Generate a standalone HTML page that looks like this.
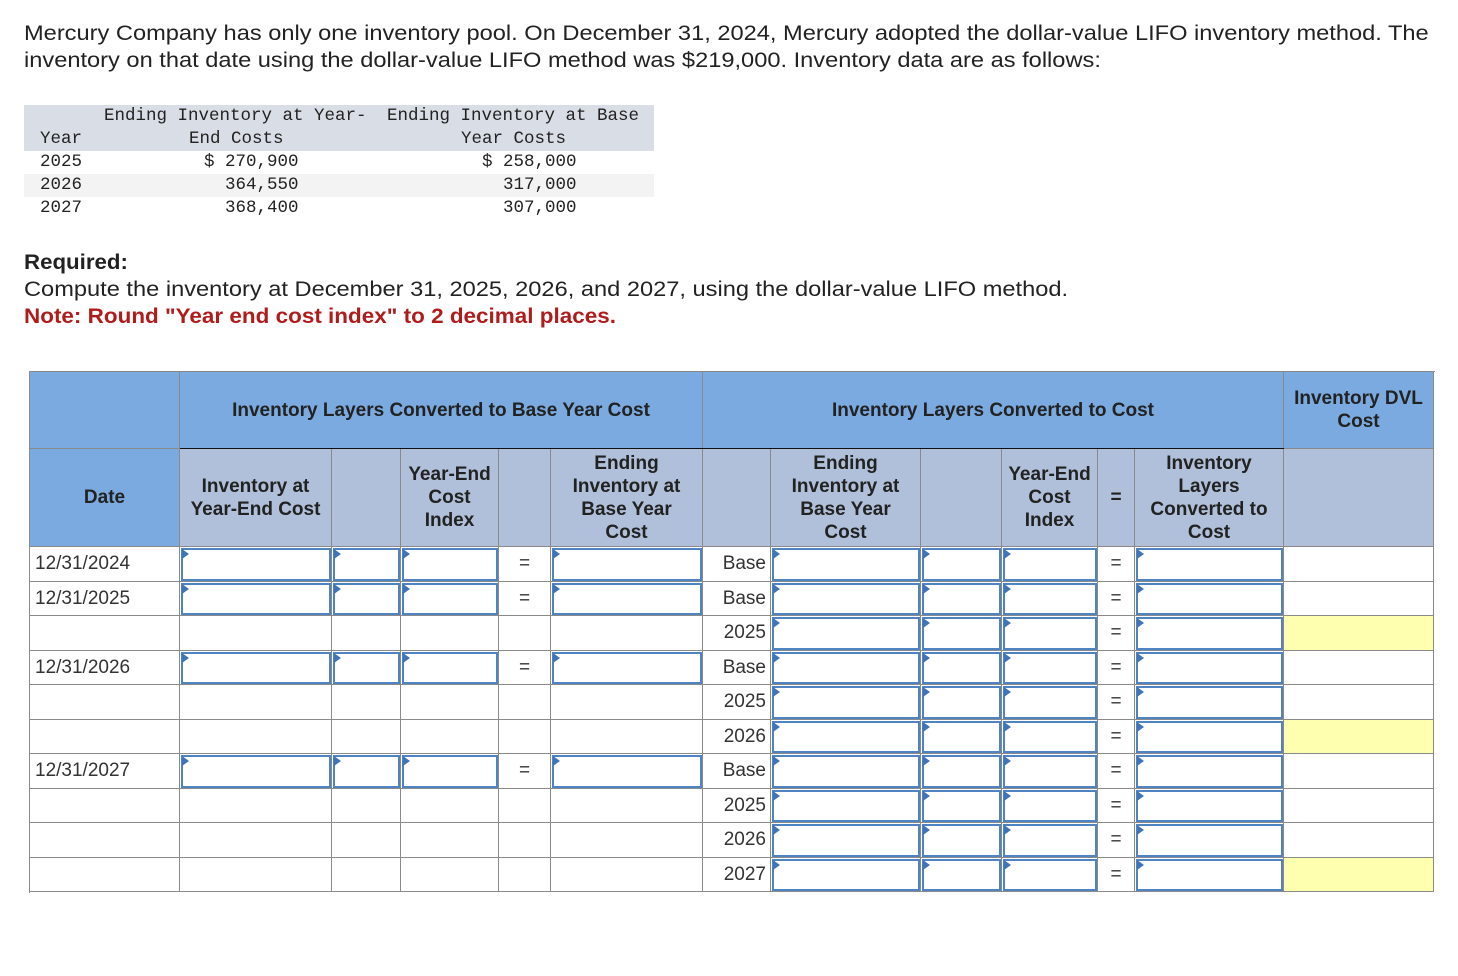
<!DOCTYPE html>
<html><head><meta charset="utf-8">
<style>
body{margin:0;width:1458px;height:976px;background:#fff;position:relative;font-family:"Liberation Sans",sans-serif;color:#222;overflow:hidden}
.t{position:absolute;white-space:nowrap}
.p{font-size:21px;left:24px;transform-origin:0 0}
.m{font-family:"Liberation Mono",monospace;font-size:17.5px;position:absolute;white-space:pre;color:#222}
.c{position:absolute;box-sizing:border-box;border-right:1px solid #8a8a8a;border-bottom:1px solid #8a8a8a;display:flex;align-items:center;justify-content:center;text-align:center;font-size:19px}
.h{font-weight:bold;font-size:19px;line-height:23px;color:#222}
.in{position:absolute;box-sizing:border-box;border:2px solid #4f84c4;background:#fff}
.in:before{content:"";position:absolute;left:-1px;top:-1px;border-left:7px solid #3f74b8;border-top:5px solid transparent;border-bottom:5px solid transparent}
</style></head><body>
<div class="t p" style="top:22px;transform:scaleX(1.125)">Mercury Company has only one inventory pool. On December 31, 2024, Mercury adopted the dollar-value LIFO inventory method. The</div>
<div class="t p" style="top:49px;transform:scaleX(1.125)">inventory on that date using the dollar-value LIFO method was $219,000. Inventory data are as follows:</div>

<div style="position:absolute;left:24px;top:105px;width:630px;height:46px;background:#d9dde6"></div>
<div style="position:absolute;left:24px;top:174px;width:630px;height:23px;background:#f3f3f3"></div>
<div class="m" style="left:104px;top:106px">Ending Inventory at Year-</div>
<div class="m" style="left:387px;top:106px">Ending Inventory at Base</div>
<div class="m" style="left:40px;top:129px">Year</div>
<div class="m" style="left:189px;top:129px">End Costs</div>
<div class="m" style="left:461px;top:129px">Year Costs</div>
<div class="m" style="left:40px;top:152px">2025</div><div class="m" style="left:204px;top:152px">$ 270,900</div><div class="m" style="left:482px;top:152px">$ 258,000</div>
<div class="m" style="left:40px;top:175px">2026</div><div class="m" style="left:225px;top:175px">364,550</div><div class="m" style="left:503px;top:175px">317,000</div>
<div class="m" style="left:40px;top:198px">2027</div><div class="m" style="left:225px;top:198px">368,400</div><div class="m" style="left:503px;top:198px">307,000</div>

<div class="t p" style="top:251px;font-weight:bold;transform:scaleX(1.06)">Required:</div>
<div class="t p" style="top:278px;transform:scaleX(1.125)">Compute the inventory at December 31, 2025, 2026, and 2027, using the dollar-value LIFO method.</div>
<div class="t p" style="top:305px;font-weight:bold;color:#b01c1c;transform:scaleX(1.07)">Note: Round "Year end cost index" to 2 decimal places.</div>

<div id="g"></div>
<script>
var X=[30,180,332,401,499,551,703,771,921,1002,1098,1135,1284,1434];
var Y=[547,582,616,651,685,720,754,789,823,858,892];
var h='';
function cell(x1,y1,x2,y2,bg,cls,txt,extra){h+='<div class="c '+(cls||'')+'" style="left:'+x1+'px;top:'+y1+'px;width:'+(x2-x1+1)+'px;height:'+(y2-y1+1)+'px;background:'+bg+';'+(extra||'')+'">'+(txt||'')+'</div>';}
h+='<div style="position:absolute;left:29px;top:371px;width:1406px;height:1px;background:#8a8a8a"></div>';
h+='<div style="position:absolute;left:29px;top:371px;width:1px;height:522px;background:#8a8a8a"></div>';
var B1='#7aaae0',B2='#b0c0da';
cell(30,372,179,448,B1);
cell(180,372,702,448,B1,'h','Inventory Layers Converted to Base Year Cost');
cell(703,372,1283,448,B1,'h','Inventory Layers Converted to Cost');
cell(1284,372,1433,448,B1,'h','Inventory DVL<br>Cost');
h+='<div style="position:absolute;left:180px;top:448px;width:1104px;height:2px;background:#111"></div>';
cell(30,449,179,546,B1,'h','Date');
var hd=['Inventory at<br>Year-End Cost','','Year-End<br>Cost<br>Index','','Ending<br>Inventory at<br>Base Year<br>Cost','','Ending<br>Inventory at<br>Base Year<br>Cost','','Year-End<br>Cost<br>Index','=','Inventory<br>Layers<br>Converted to<br>Cost',''];
for(var i=1;i<13;i++)cell(X[i],449,X[i+1]-1,546,B2,'h',hd[i-1]);
var rows=[['12/31/2024','Base',1,0],['12/31/2025','Base',1,0],['','2025',0,1],['12/31/2026','Base',1,0],['','2025',0,0],['','2026',0,1],['12/31/2027','Base',1,0],['','2025',0,0],['','2026',0,0],['','2027',0,1]];
function inp(x1,y1,x2,y2){h+='<div class="in" style="left:'+(x1+1)+'px;top:'+(y1+1)+'px;width:'+(x2-x1-1)+'px;height:'+(y2-y1-1)+'px"></div>';}
for(var r=0;r<10;r++){var y1=Y[r],y2=Y[r+1]-1,R=rows[r];
 cell(30,y1,179,y2,'#fff','',R[0],'justify-content:flex-start;padding-left:5px;color:#333');
 for(var i=1;i<13;i++){var bg=(i==12&&R[3])?'#ffffb0':'#fff';var t='';
  if(i==4&&R[2])t='=';if(i==10)t='=';if(i==6)t=R[1];
  cell(X[i],y1,X[i+1]-1,y2,bg,'',t,i==6?'justify-content:flex-end;padding-right:4px;color:#333':'color:#333');}
 if(R[2]){inp(180,y1,331,y2);inp(332,y1,400,y2);inp(401,y1,498,y2);inp(551,y1,702,y2);}
 inp(771,y1,920,y2);inp(921,y1,1001,y2);inp(1002,y1,1097,y2);inp(1135,y1,1283,y2);
}
document.getElementById('g').innerHTML=h;
</script>
</body></html>
